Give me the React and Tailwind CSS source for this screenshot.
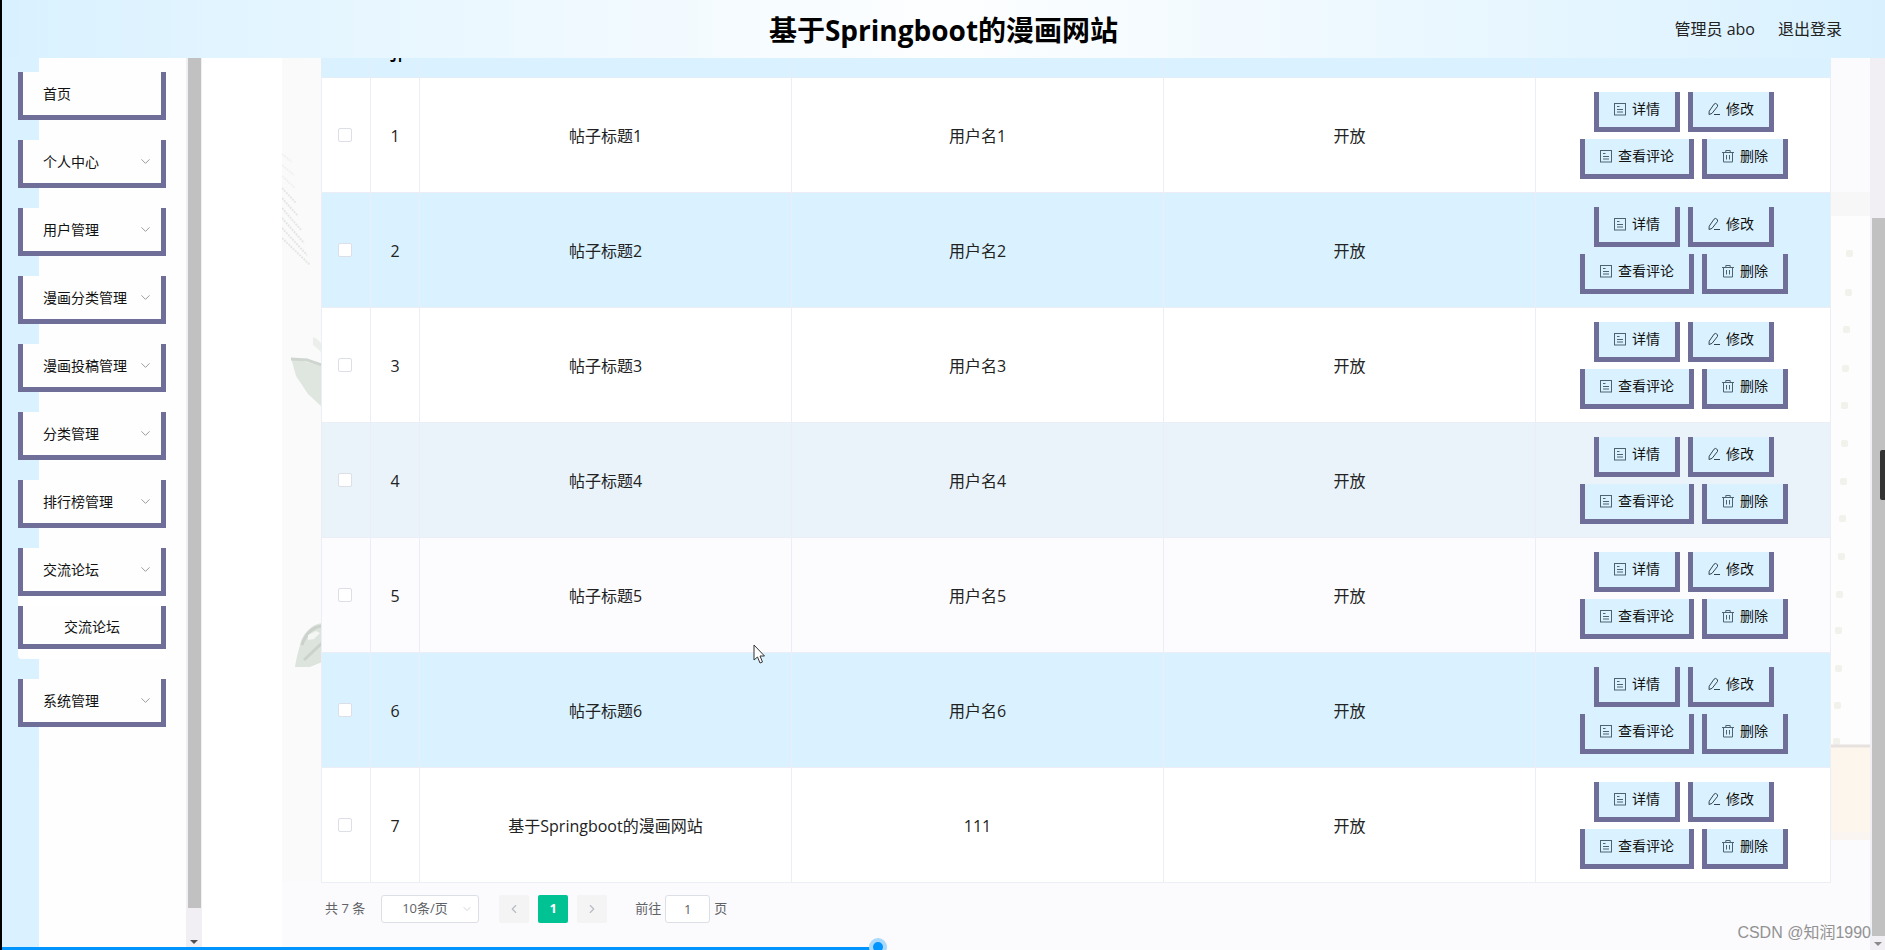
import { useState } from 'react'
import { ChevronDown, ChevronLeft, ChevronRight } from 'lucide-react'

const MENU = [
  { label: '首页' },
  { label: '个人中心', children: [] },
  { label: '用户管理', children: [] },
  { label: '漫画分类管理', children: [] },
  { label: '漫画投稿管理', children: [] },
  { label: '分类管理', children: [] },
  { label: '排行榜管理', children: [] },
  { label: '交流论坛', children: ['交流论坛'] },
  { label: '系统管理', children: [] },
]

const ROWS = [
  { id: 1, title: '帖子标题1', user: '用户名1', status: '开放', bg: 'bg-white' },
  { id: 2, title: '帖子标题2', user: '用户名2', status: '开放', bg: 'bg-[#daf2ff]' },
  { id: 3, title: '帖子标题3', user: '用户名3', status: '开放', bg: 'bg-white' },
  { id: 4, title: '帖子标题4', user: '用户名4', status: '开放', bg: 'bg-[#ebf3fa]' },
  { id: 5, title: '帖子标题5', user: '用户名5', status: '开放', bg: 'bg-[#fcfcfe]' },
  { id: 6, title: '帖子标题6', user: '用户名6', status: '开放', bg: 'bg-[#daf2ff]' },
  { id: 7, title: '基于Springboot的漫画网站', user: '111', status: '开放', bg: 'bg-white' },
]

const DOTS = [[20, 195], [19, 234], [17, 271], [16, 310], [15, 347], [15, 385], [14, 423], [13, 460], [12, 498], [10, 536], [9, 572], [9, 610], [8, 647], [7, 683]]

function DocIcon() {
  return (
    <svg className="w-3.5 h-3.5 shrink-0" viewBox="0 0 14 14" fill="none" stroke="#4d6470">
      <rect x="1.5" y="1.5" width="11" height="11.5" />
      <path d="M4 4.5h2.5M4 7.5h3M4 10h6M7 7.5h3" />
    </svg>
  )
}

function EditIcon() {
  return (
    <svg className="w-3.5 h-3.5 shrink-0" viewBox="0 0 14 14" fill="none" stroke="#33454f">
      <path d="M7 2.2L8.6 1.4L10.6 2.8L10.4 4.6L5 11.4L2 12.5L2.2 9.2Z" />
      <path d="M7 12.5h6" />
    </svg>
  )
}

function TrashIcon() {
  return (
    <svg className="w-3.5 h-3.5 shrink-0" viewBox="0 0 14 14" fill="none" stroke="#4d6470">
      <path d="M1 3.5h12M2.5 3.5v9.5h9V3.5M4.8 3.5V1.5h4.4v2M5.5 6v4.5M8.5 6v4.5" />
    </svg>
  )
}

function ActionButton({ icon: Icon, label }) {
  return (
    <button className="flex items-center gap-[5px] h-10 pl-3.5 pr-[15px] border-[5px] border-t-0 border-[#6f6e98] bg-[#daf2ff] text-sm text-[#111]">
      <Icon />
      {label}
    </button>
  )
}

function Header() {
  return (
    <header className="flex items-center h-[58px] shrink-0 px-[43px] bg-linear-to-r from-[#d9f1ff] via-[#fdfeff] to-[#d9f1ff]">
      <div className="flex-1" />
      <h1 className="pt-0.5 text-[28px] leading-none font-bold text-black">基于Springboot的漫画网站</h1>
      <div className="flex-1 flex justify-end gap-[23px] text-base text-[#222]">
        <span>管理员 abo</span>
        <a href="#logout">退出登录</a>
      </div>
    </header>
  )
}

function Sidebar() {
  const [open, setOpen] = useState('交流论坛')

  return (
    <aside className="flex w-[200px] shrink-0 bg-linear-to-r from-[#daf2ff] from-[37px] to-[#fefefe] to-[37px]">
      <nav className="flex-1 flex flex-col gap-5 pt-3.5 pl-4 pr-5">
        {MENU.map(item => (
          <div key={item.label}>
            <button
              onClick={() => item.children && setOpen(open === item.label ? '' : item.label)}
              className="flex items-center justify-between w-full h-12 pl-5 pr-2 border-[5px] border-t-0 border-[#6f6e98] bg-[#fefefe] text-sm text-[#111]"
            >
              {item.label}
              {item.children && <ChevronDown size={15} strokeWidth={1.5} className="text-[#909399]" />}
            </button>
            {open === item.label && item.children.length > 0 && (
              <div className="py-2.5 bg-white rounded-bl">
                {item.children.map(c => (
                  <a key={c} href="#forum" className="flex items-center justify-center h-[43px] pt-1 border-[5px] border-t-0 border-[#6f6e98] bg-[#fefefe] text-sm text-[#111]">{c}</a>
                ))}
              </div>
            )}
          </div>
        ))}
      </nav>

      {/* scrollbar */}
      <div className="w-4 flex flex-col items-center bg-[#f1eff3]">
        <div className="w-[13px] flex-1 bg-[#c1c1c1]" />
        <svg className="w-2 h-1 mt-8 mb-1.5" viewBox="0 0 8 4"><path d="M0 0h8L4 4z" fill="#505050" /></svg>
      </div>
    </aside>
  )
}

function Backdrop() {
  return (
    <>
      <svg className="absolute left-0 top-0 w-10 h-full" fill="none">
        <path d="M0 0h40V700H0z" fill="#fbfafb" />
        <path d="M0 96l10 8M0 107l12 10M0 118l13 12" stroke="#f0f1ee" strokeWidth="2" strokeDasharray="2 1" />
        <path d="M0 130l14 15M0 140l16 18M0 150l19 22M0 160l22 25M0 170l25 27M0 180l28 27" stroke="#e3e8e2" strokeWidth="2" strokeDasharray="2 1" />
        <path d="M31 279l4 2 5 5v9l-4-4-5-4z" fill="#ebeeea" />
        <path d="M9 300l31 8v41L26 336L14 318z" fill="#dfe6e0" />
        <path d="M9 301l16 1 15 5" stroke="#cfd6d0" strokeWidth="3" />
        <path d="M13 609c2-12 3-14 6-26 4-10 12-17 21-18v39l-12 5z" fill="#dde3dd" />
        <path d="M20 587c4-12 10-18 20-19M22 602l18-17" stroke="#cbd1cb" strokeWidth="3" />
        <path d="M26 577l8-4 4 2-6 6-6 1z" fill="#f4f6f4" />
        <path d="M0 700h40v123H0z" fill="#fafafa" />
      </svg>
      <svg className="absolute right-0 top-0 w-10 h-full" fill="none">
        <path d="M0 134h40v24H0z" fill="#f8f7f8" />
        <path d="M0 158h40v530H0z" fill="#fdfdfe" />
        {DOTS.map(([x, y]) => (
          <rect key={y} x={x - 4} y={y - 3} width="7" height="7" rx="2" fill="#f1f2eb" />
        ))}
        <path d="M0 688h40v88H0z" fill="#fcf6ec" />
        <path d="M0 688h40" stroke="#e7e1df" strokeWidth="3" />
        <path d="M0 774h40v8H0z" fill="#faf5f1" />
      </svg>
    </>
  )
}

function PostTable() {
  return (
    <table className="relative w-full -mt-[51px] table-fixed border-collapse text-base text-[#222] text-center [&_td]:border [&_td]:border-[#ebeef5] [&_th]:border [&_th]:border-[#e4eef8]">
      <colgroup>
        <col className="w-[49px]" />
        <col className="w-[49px]" />
        <col />
        <col />
        <col />
        <col className="w-[295px]" />
      </colgroup>
      <thead>
        <tr className="h-[70px] bg-[#daf2ff] text-black">
          <th><input type="checkbox" aria-label="全选" /></th>
          <th className="px-3 leading-[23px]">索引</th>
          <th aria-label="帖子标题" />
          <th aria-label="用户名" />
          <th aria-label="状态" />
          <th aria-label="操作" />
        </tr>
      </thead>
      <tbody>
        {ROWS.map(row => (
          <tr key={row.id} className={`h-[115px] ${row.bg}`}>
            <td className="pr-0.5">
              <input type="checkbox" aria-label={row.title} className="block mx-auto appearance-none w-3.5 h-3.5 rounded-xs border border-[#dcdfe6] bg-white checked:bg-[#00c292]" />
            </td>
            <td className="pt-0.5">{row.id}</td>
            <td className="pt-0.5">{row.title}</td>
            <td className="pt-0.5">{row.user}</td>
            <td className="pt-0.5">{row.status}</td>
            <td>
              <div className="flex flex-wrap justify-center gap-x-2 gap-y-[7px] pl-0.5">
                <ActionButton icon={DocIcon} label="详情" />
                <ActionButton icon={EditIcon} label="修改" />
                <ActionButton icon={DocIcon} label="查看评论" />
                <ActionButton icon={TrashIcon} label="删除" />
              </div>
            </td>
          </tr>
        ))}
      </tbody>
    </table>
  )
}

function Pagination() {
  return (
    <div className="relative flex items-center pt-3 pl-1 text-[13px] text-[#606266]">
      <span>共 7 条</span>
      <div className="relative ml-4">
        <select aria-label="每页条数" className="appearance-none block w-[98px] h-7 pl-5 rounded-[3px] border border-[#dcdfe6] bg-white">
          <option>10条/页</option>
          <option>20条/页</option>
        </select>
        <ChevronDown size={12} strokeWidth={1.5} className="absolute right-1.5 top-2 text-[#c0c4cc] pointer-events-none" />
      </div>
      <div className="flex gap-[9px] ml-5">
        <button aria-label="上一页" className="flex items-center justify-center w-[30px] h-7 rounded-xs bg-[#f4f4f5] text-[#b8bbc2]"><ChevronLeft size={14} /></button>
        <button className="w-[30px] h-7 rounded-xs bg-[#00c292] text-white font-bold">1</button>
        <button aria-label="下一页" className="flex items-center justify-center w-[30px] h-7 rounded-xs bg-[#f4f4f5] text-[#b8bbc2]"><ChevronRight size={14} /></button>
      </div>
      <label className="flex items-center gap-1 ml-7">
        前往
        <input type="text" defaultValue="1" className="w-[45px] h-7 rounded-[3px] border border-[#dcdfe6] bg-white text-center" />
        页
      </label>
    </div>
  )
}

export default function App() {
  return (
    <div className="relative flex flex-col h-screen overflow-hidden border-l-2 border-black bg-white font-['Open_Sans','Noto_Sans_CJK_SC',sans-serif]">
      <Header />
      <div className="flex-1 flex min-h-0">
        <Sidebar />
        <main className="relative flex-1 min-w-0 ml-20 pl-[39px] pr-[39px] overflow-hidden bg-[#fbfafd]">
          <Backdrop />
          <PostTable />
          <Pagination />
        </main>
        <div className="relative w-[15px] shrink-0 flex flex-col items-end bg-[#f1eff3]">
          <div className="h-40 shrink-0" />
          <div className="flex-1 w-[13px] bg-[#c1c1c1]" />
          <svg className="w-2 h-1 mt-1.5 mr-[3px] mb-1" viewBox="0 0 8 4"><path d="M0 0h8L4 4z" fill="#8a8a8a" /></svg>
          <div className="absolute right-0 top-[392px] w-[5px] h-[50px] rounded-l-xs bg-[#333]" />
        </div>
      </div>

      {/* playback progress */}
      <div className="absolute left-0 bottom-0 w-[876px] h-[3px] bg-[#0094ff]" />
      <div className="absolute left-[867px] -bottom-[6px] w-[18px] h-[18px] rounded-full border-4 border-[#a9d9fb] bg-[#0094ff]" />

      {/* mouse pointer */}
      <svg className="absolute left-[751px] top-[644px] w-3.5 h-5" viewBox="0 0 14 20">
        <path d="M1 1v15l3.5-3 2.5 6 2.5-1-2.5-6h4.5z" fill="#fff" stroke="#333" />
      </svg>

      <span className="absolute right-[14px] bottom-[5px] text-base text-[#929292] font-['Liberation_Sans','Noto_Sans_CJK_SC',sans-serif]">CSDN @知润1990</span>
    </div>
  )
}
